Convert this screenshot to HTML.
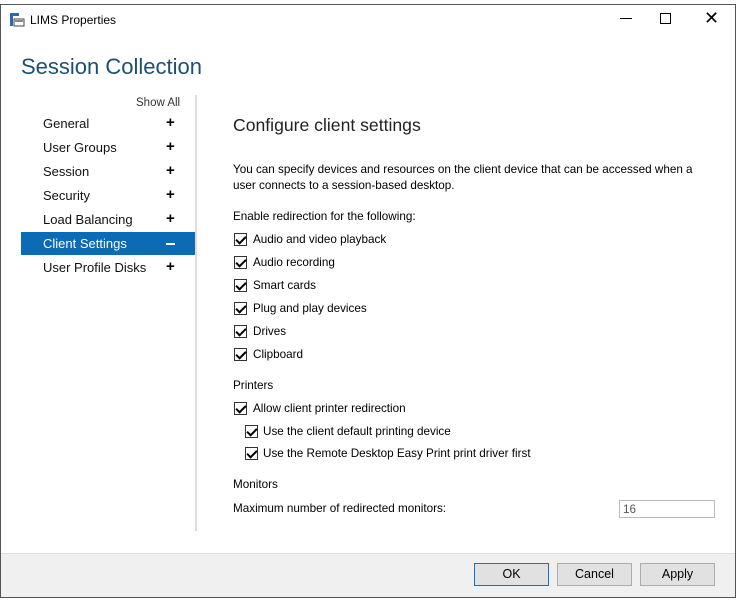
<!DOCTYPE html>
<html><head><style>
*{margin:0;padding:0;box-sizing:border-box}
body{width:739px;height:601px;background:#fff;font-family:"Liberation Sans",sans-serif;font-size:11.7px;color:#000;position:relative;overflow:hidden}
.a{position:absolute;white-space:nowrap}
.win{position:absolute;left:0;top:4px;width:736px;height:594px;border:1px solid #555;background:#fff}
.nav{font-size:13px;color:#111}
.plus{font-size:15px;font-weight:bold}
.cb{position:absolute;width:13px;height:13px;border:1px solid #333;background:#fff}
.cb:after{content:"";position:absolute;left:3px;top:0px;width:4px;height:8px;border:solid #000;border-width:0 2px 2px 0;transform:rotate(45deg)}
.btn{position:absolute;top:563px;width:75px;height:23px;background:#e1e1e1;border:1px solid #adadad;text-align:center;line-height:21px;font-size:12.5px}
</style></head><body>
<div class="win"></div>
<svg class="a" style="left:9px;top:12px" width="16" height="16"><rect x="1" y="1" width="3" height="13" fill="#2a6ab0"/><rect x="1" y="1" width="9" height="3" fill="#2a6ab0"/><rect x="5" y="7" width="10" height="7" fill="#fff" stroke="#444"/><rect x="6" y="8" width="8" height="2" fill="#888"/></svg>
<div class="a" style="left:30px;top:13px;font-size:12px">LIMS Properties</div>
<div class="a" style="left:620px;top:18px;width:12px;height:1px;background:#000"></div>
<div class="a" style="left:660px;top:13px;width:11px;height:11px;border:1px solid #000"></div>
<div class="a" style="left:704px;top:8px;font-size:18px">✕</div>
<div class="a" style="left:21px;top:54px;font-size:22px;color:#1d4f72">Session Collection</div>
<div class="a" style="left:136px;top:97px;font-size:11.5px;color:#333">Show All</div>
<div class="a" style="left:195px;top:95px;width:2px;height:436px;background:#ddd"></div>
<div class="a nav" style="left:43px;top:116px">General</div><div class="a plus" style="left:166px;top:114px">+</div>
<div class="a nav" style="left:43px;top:140px">User Groups</div><div class="a plus" style="left:166px;top:138px">+</div>
<div class="a nav" style="left:43px;top:164px">Session</div><div class="a plus" style="left:166px;top:162px">+</div>
<div class="a nav" style="left:43px;top:188px">Security</div><div class="a plus" style="left:166px;top:186px">+</div>
<div class="a nav" style="left:43px;top:212px">Load Balancing</div><div class="a plus" style="left:166px;top:210px">+</div>
<div class="a" style="left:21px;top:232px;width:174px;height:23px;background:#0b6bb5"></div>
<div class="a nav" style="left:43px;top:236px;color:#fff">Client Settings</div><div class="a" style="left:166px;top:243px;width:9px;height:2px;background:#fff"></div>
<div class="a nav" style="left:43px;top:260px">User Profile Disks</div><div class="a plus" style="left:166px;top:258px">+</div>
<div class="a" style="left:233px;top:115px;font-size:17.6px;color:#222">Configure client settings</div>
<div class="a" style="left:233px;top:162px;line-height:16px">You can specify devices and resources on the client device that can be accessed when a<br>user connects to a session-based desktop.</div>
<div class="a" style="left:233px;top:210px">Enable redirection for the following:</div>
<div class="cb" style="left:234px;top:233px"></div><div class="a" style="left:253px;top:233px">Audio and video playback</div>
<div class="cb" style="left:234px;top:256px"></div><div class="a" style="left:253px;top:256px">Audio recording</div>
<div class="cb" style="left:234px;top:279px"></div><div class="a" style="left:253px;top:279px">Smart cards</div>
<div class="cb" style="left:234px;top:302px"></div><div class="a" style="left:253px;top:302px">Plug and play devices</div>
<div class="cb" style="left:234px;top:325px"></div><div class="a" style="left:253px;top:325px">Drives</div>
<div class="cb" style="left:234px;top:348px"></div><div class="a" style="left:253px;top:348px">Clipboard</div>
<div class="a" style="left:233px;top:379px">Printers</div>
<div class="cb" style="left:234px;top:402px"></div><div class="a" style="left:253px;top:402px">Allow client printer redirection</div>
<div class="cb" style="left:245px;top:425px"></div><div class="a" style="left:263px;top:425px">Use the client default printing device</div>
<div class="cb" style="left:245px;top:447px"></div><div class="a" style="left:263px;top:447px">Use the Remote Desktop Easy Print print driver first</div>
<div class="a" style="left:233px;top:478px">Monitors</div>
<div class="a" style="left:233px;top:502px">Maximum number of redirected monitors:</div>
<div class="a" style="left:619px;top:500px;width:96px;height:18px;border:1px solid #bbb;color:#555;padding:2px 3px">16</div>
<div class="a" style="left:1px;top:553px;width:734px;height:44px;background:#f0f0f0;border-top:1px solid #ddd"></div>
<div class="btn" style="left:474px;border:1px solid #0078d7">OK</div>
<div class="btn" style="left:557px">Cancel</div>
<div class="btn" style="left:640px">Apply</div>
</body></html>
